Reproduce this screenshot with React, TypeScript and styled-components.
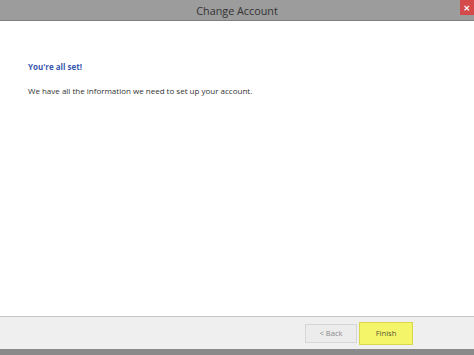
import React from "react";
import styled, { createGlobalStyle } from "styled-components";

const GlobalStyle = createGlobalStyle`
  html, body {
    margin: 0;
    padding: 0;
    background: #ffffff;
  }
  #root {
    width: 474px;
    height: 355px;
  }
`;

const Window = styled.div`
  width: 474px;
  height: 355px;
  display: flex;
  flex-direction: column;
  font-family: "Open Sans", "Noto Sans", sans-serif;
  overflow: hidden;
`;

const TitleBar = styled.div`
  height: 20px;
  background: #9c9c9c;
  border-bottom: 1px solid #7e7e7e;
  display: flex;
  align-items: center;
  justify-content: center;
  position: relative;
  flex-shrink: 0;
`;

const Title = styled.div`
  font-size: 10.8px;
  color: #333333;
`;

const CloseButton = styled.div`
  position: absolute;
  right: 0;
  top: 0;
  width: 14px;
  height: 15px;
  background: #d44a4a;
  display: flex;
  align-items: center;
  justify-content: flex-start;
  padding-left: 3px;
  box-sizing: border-box;
  color: #ffffff;
  font-size: 9px;
  font-weight: bold;
  font-family: "DejaVu Sans", sans-serif;
`;

const Content = styled.div`
  flex: 1;
  background: #ffffff;
  padding: 40px 0 0 28px;
  display: flex;
  flex-direction: column;
  gap: 13px;
`;

const Heading = styled.div`
  font-size: 8px;
  font-weight: bold;
  color: #3a58b0;
`;

const Message = styled.div`
  font-size: 8px;
  color: #333333;
`;

const Footer = styled.div`
  height: 32px;
  background: #efefef;
  border-top: 1px solid #c4c4c4;
  display: flex;
  align-items: center;
  justify-content: flex-end;
  padding-right: 61px;
  gap: 2px;
  flex-shrink: 0;
`;

const Button = styled.div<{ highlighted?: boolean }>`
  width: ${(p) => (p.highlighted ? "54px" : "52px")};
  height: ${(p) => (p.highlighted ? "23px" : "19px")};
  box-sizing: border-box;
  border: 1px solid ${(p) => (p.highlighted ? "#d9d84a" : "#d6d6d6")};
  background: ${(p) => (p.highlighted ? "#f5f56a" : "#ececec")};
  color: ${(p) => (p.highlighted ? "#555533" : "#8a8a8a")};
  font-size: 7.6px;
  display: flex;
  align-items: center;
  justify-content: center;
`;

const BottomStrip = styled.div`
  height: 6px;
  background: #8a8a8a;
  flex-shrink: 0;
`;

export default function App() {
  return (
    <>
      <GlobalStyle />
      <Window>
        <TitleBar>
          <Title>Change Account</Title>
          <CloseButton>×</CloseButton>
        </TitleBar>
        <Content>
          <Heading>You're all set!</Heading>
          <Message>We have all the information we need to set up your account.</Message>
        </Content>
        <Footer>
          <Button>&lt; Back</Button>
          <Button highlighted>Finish</Button>
        </Footer>
        <BottomStrip />
      </Window>
    </>
  );
}
